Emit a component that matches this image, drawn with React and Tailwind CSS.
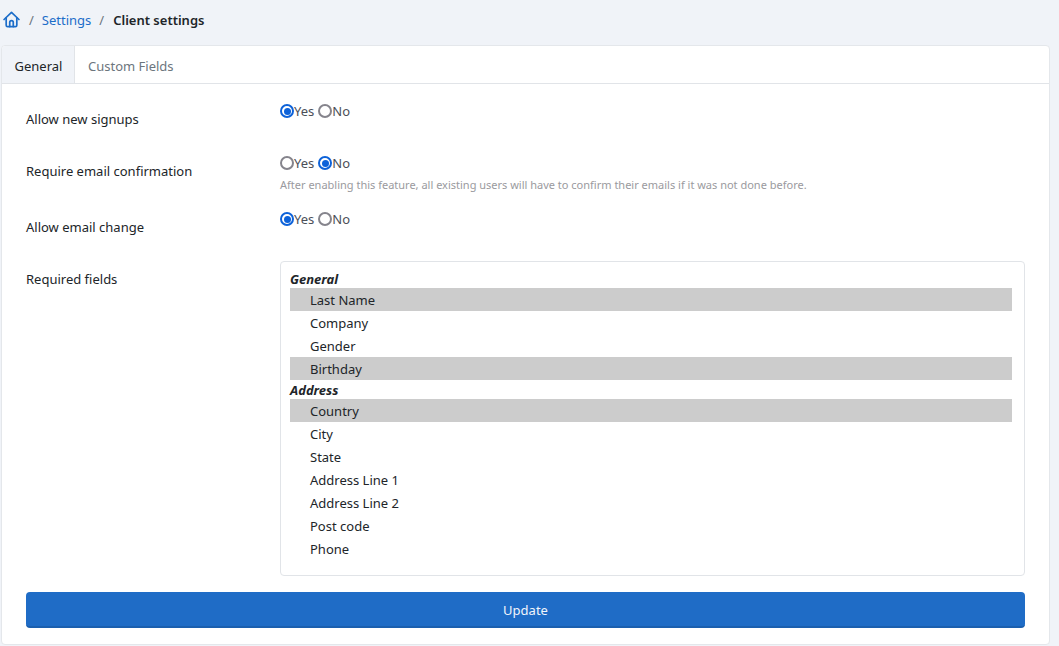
import React from 'react';

const font = "font-['Noto_Sans','Open_Sans',sans-serif]";

function Radio({ checked, label }) {
    return (
        <label className="flex items-center">
            <span className={`w-[14px] h-[14px] rounded-full border-2 flex items-center justify-center bg-white ${checked ? 'border-[#0d62d9]' : 'border-[#85848c]'}`}>
                {checked && <span className="w-[7px] h-[7px] rounded-full bg-[#0d62d9]" />}
            </span>
            <span className="mt-[2px]">{label}</span>
        </label>
    );
}

function YesNo({ value }) {
    return (
        <div className="flex items-center gap-[4px] h-[20px] text-[13px] text-[#4b4f58]">
            <Radio checked={value === 'yes'} label="Yes" />
            <Radio checked={value === 'no'} label="No" />
        </div>
    );
}

function Option({ label, selected }) {
    return (
        <div className={`h-[23px] pl-[20px] leading-[25px] text-[13px] text-[#212529] ${selected ? 'bg-[#cccccc]' : ''}`}>
            {label}
        </div>
    );
}

function Group({ label }) {
    return <div className="h-[19px] leading-[21px] text-[13px] font-bold italic text-[#212529]">{label}</div>;
}

export default function App() {
    return (
        <div className={`w-[1059px] h-[646px] overflow-hidden bg-[#f0f3f8] ${font}`}>
            <div className="h-[45px] pl-[3px] pb-[4px] flex items-center text-[13px]">
                <svg width="17" height="17" viewBox="0 0 24 24" fill="none" stroke="#1c6dc9" strokeWidth="2.4" strokeLinejoin="round" strokeLinecap="round" className="mb-[2px]">
                    <path d="M1.5 12 12 2l10.5 10" />
                    <path d="M4.5 9.5V20a2 2 0 0 0 2 2h11a2 2 0 0 0 2-2V9.5" />
                    <path d="M9.5 22v-6a2.5 2.5 0 0 1 5 0v6" />
                </svg>
                <span className="ml-[9px] text-[#6c757d]">/</span>
                <span className="ml-[8px] text-[#1c6dc9]">Settings</span>
                <span className="ml-[8px] text-[#6c757d]">/</span>
                <span className="ml-[9px] font-semibold text-[#212529]">Client settings</span>
            </div>

            <div className="ml-[1px] w-[1049px] h-[600px] bg-white border border-[#e4e7eb] rounded-[4px]">
                <div className="h-[38px] flex border-b border-[#e1e4e8]">
                    <div className="w-[73px] h-[37px] pt-[4px] pl-[1px] bg-[#f0f3f8] border-r border-[#e1e4e8] rounded-tl-[4px] flex items-center justify-center text-[13px] text-[#212529]">
                        General
                    </div>
                    <div className="ml-[13px] pt-[4px] flex items-center text-[13px] text-[#6c757d]">Custom Fields</div>
                </div>

                <div className="pl-[24px] pr-[24px] text-[13px] text-[#212529]">
                    <div className="flex h-[52px] pt-[17px]">
                        <div className="w-[254px] pt-[7px] leading-[22px]">Allow new signups</div>
                        <YesNo value="yes" />
                    </div>
                    <div className="flex h-[56px] pt-[17px]">
                        <div className="w-[254px] pt-[7px] leading-[22px]">Require email confirmation</div>
                        <div>
                            <YesNo value="no" />
                            <div className="mt-[4px] text-[11px] leading-[16px] text-[#9a9a9e]">
                                After enabling this feature, all existing users will have to confirm their emails if it was not done before.
                            </div>
                        </div>
                    </div>
                    <div className="flex h-[52px] pt-[17px]">
                        <div className="w-[254px] pt-[7px] leading-[22px]">Allow email change</div>
                        <YesNo value="yes" />
                    </div>
                    <div className="flex mt-[17px]">
                        <div className="w-[254px] pt-[7px] leading-[22px]">Required fields</div>
                        <div className="w-[745px] h-[315px] border border-[#e1e4e8] rounded-[4px] pt-[7px] pl-[9px] pr-[12px]">
                            <Group label="General" />
                            <Option label="Last Name" selected />
                            <Option label="Company" />
                            <Option label="Gender" />
                            <Option label="Birthday" selected />
                            <Group label="Address" />
                            <Option label="Country" selected />
                            <Option label="City" />
                            <Option label="State" />
                            <Option label="Address Line 1" />
                            <Option label="Address Line 2" />
                            <Option label="Post code" />
                            <Option label="Phone" />
                        </div>
                    </div>
                    <button className="block mt-[16px] w-[999px] h-[36px] pt-[4px] rounded-[4px] bg-[#1f6cc6] border-b-2 border-[#1b5fae] text-[13px] text-[#f1f5fb]">
                        Update
                    </button>
                </div>
            </div>
        </div>
    );
}
